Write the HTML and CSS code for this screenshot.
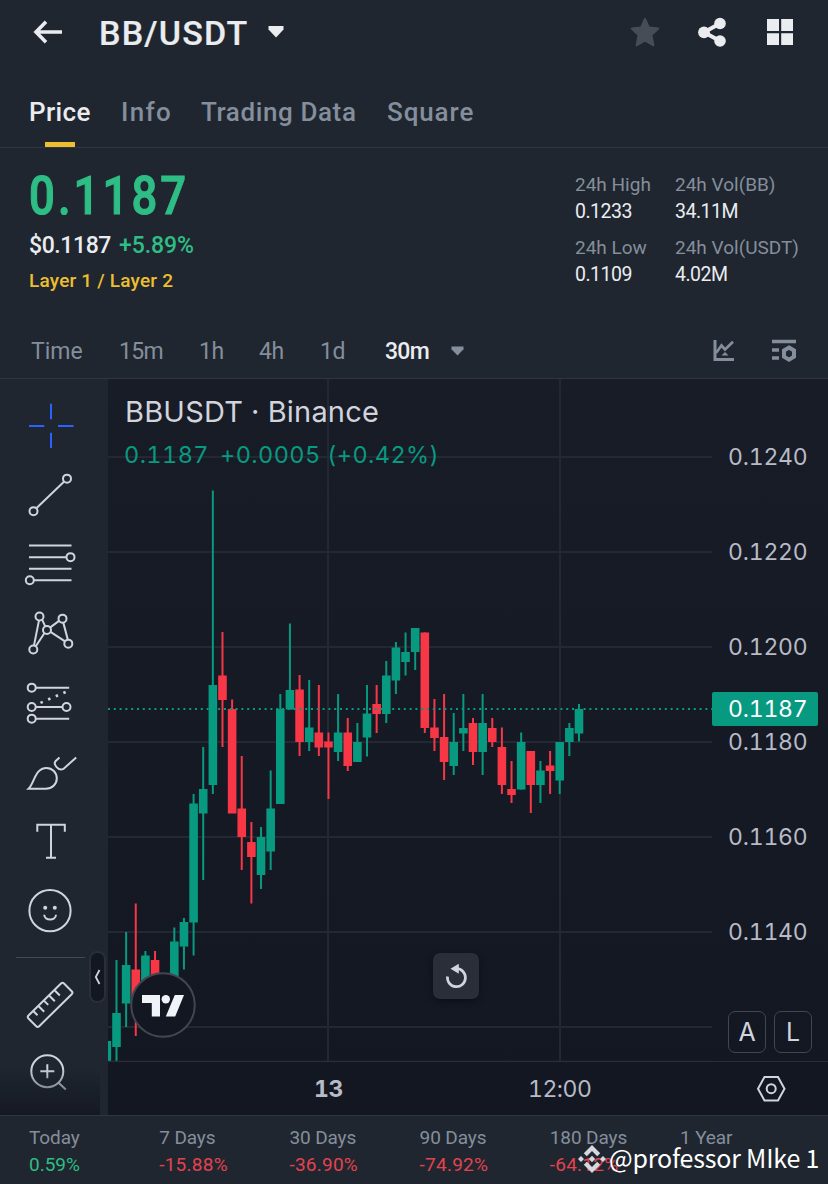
FILE: index.html
```html
<!DOCTYPE html>
<html lang="en">
<head>
<meta charset="utf-8">
<title>BB/USDT</title>
<link rel="stylesheet" href="styles.css">
</head>
<body>
<div class="app">
  <header class="topbar">
    <svg class="back" width="30" height="24" viewBox="0 0 30 24" fill="none" stroke="#eaecef" stroke-width="3.6"><path d="M13 1.8 3 12l10 10.2M3.5 12H29"/></svg>
    <h1 class="pair">BB/USDT</h1>
    <svg class="pair-caret" width="16" height="12" viewBox="0 0 16 12" fill="#eaecef"><path d="M.5 0h15v3.500L8 11.500.500 3.500z"/></svg>
    <svg class="star" width="30" height="30" viewBox="0 0 30 30" fill="#474d57" stroke="#474d57" stroke-width="2" stroke-linejoin="round"><path d="M15 1.800l3.900 8.600 9.400 1.200-6.900 6.400 2 10.300-8.400-4.800-8.400 4.800 2-10.300L1.700 11.600l9.400-1.200z"/></svg>
    <svg class="share" width="30" height="30" viewBox="0 0 30 30" fill="#eaecef"><path d="M23 6.500 7 15.300l16 8.700" fill="none" stroke="#eaecef" stroke-width="4"/><circle cx="23" cy="6.500" r="5.800"/><circle cx="7" cy="15.300" r="5.900"/><circle cx="23" cy="24" r="5.800"/></svg>
    <svg class="grid" width="26" height="26" viewBox="0 0 26 26" fill="#eaecef"><path d="M0 0h12v12H0zM14.200 0h12v12h-12zM0 14.200h12v12H0zM14.200 14.200h12v12h-12z"/></svg>
  </header>

  <nav class="tabs">
    <a class="tab price-tab">Price</a>
    <a class="tab info-tab">Info</a>
    <a class="tab data-tab">Trading Data</a>
    <a class="tab square-tab">Square</a>
  </nav>

  <section class="ticker">
    <div class="quote">
      <div class="last">0.1187</div>
      <div class="fiat"><span class="usd">$0.1187</span><span class="change">+5.89%</span></div>
      <div class="tags">Layer 1 / Layer 2</div>
    </div>
    <dl class="stats">
      <div><dt>24h High</dt><dd>0.1233</dd></div>
      <div><dt>24h Vol(BB)</dt><dd>34.11M</dd></div>
      <div><dt>24h Low</dt><dd>0.1109</dd></div>
      <div><dt>24h Vol(USDT)</dt><dd>4.02M</dd></div>
    </dl>
  </section>

  <nav class="intervals">
    <span class="iv time">Time</span>
    <span class="iv m15">15m</span>
    <span class="iv h1">1h</span>
    <span class="iv h4">4h</span>
    <span class="iv d1">1d</span>
    <span class="iv m30">30m</span>
    <svg class="iv-caret" width="13" height="10" viewBox="0 0 13 10" fill="#848e9c"><path d="M.500.500h12v2.800L6.500 9.500.500 3.300z"/></svg>
    <svg class="indicator" width="22" height="22" viewBox="0 0 22 22" fill="none" stroke="#848e9c" stroke-width="3"><path d="M2 0v19.500h19"/><path d="M3 13l5.500-7.500 3.500 4L20 1.800" stroke-width="2.700"/><path d="M8.500 15.500h7L12 12z" fill="#848e9c" stroke="none"/></svg>
    <svg class="settings" width="24" height="24" viewBox="0 0 24 24" fill="none" stroke="#848e9c"><path d="M0 2.500h24M0 11h7M0 19h7" stroke-width="3.300"/><path d="M17 8.500l5 3v6.200l-5 3-5-3v-6.200z" stroke-width="4"/></svg>
  </nav>

  <main class="workspace">
    <aside class="tools">
      <svg class="tool" viewBox="0 -34.625 108 69.250"><path class="accent" d="M29 .300h15.300M58 .300h15.500M51-21.800v15.300M51 7v15.300"/></svg>
      <svg class="tool" viewBox="0 -34.625 108 69.250"><path d="M36.600 12.400 64.200-14.200"/><circle cx="67" cy="-17" r="4"/><circle cx="33.500" cy="15.500" r="4"/></svg>
      <svg class="tool" viewBox="0 -34.625 108 69.250"><path d="M29-19.200h42.500M29-7.500h37M29 4h42.500M34 15.600h37.500"/><circle cx="70.500" cy="-7.500" r="4"/><circle cx="29.800" cy="15.600" r="4"/></svg>
      <svg class="tool" viewBox="0 -34.625 108 69.250"><path d="M39-13.200 34 11.800M42-14.200l3.200 7M50.300-6.200l8.700-6.500M50.500-1.700l14.500 9.500M44.500-.600 35.800 12.700M63.300-11l4.500 17"/><circle cx="39.500" cy="-17.200" r="4"/><circle cx="62.500" cy="-15" r="4"/><circle cx="47" cy="-3.700" r="4"/><circle cx="68.300" cy="10" r="4"/><circle cx="33.300" cy="15.800" r="4"/></svg>
      <svg class="tool" viewBox="0 -34.625 108 69.250"><path d="M36-15h33.200M36 4.300h26.500M36 16h33.200"/><path d="M40.500.200 66.500-11" stroke-dasharray="2.500 5.800" stroke-width="2.600"/><circle cx="31.700" cy="-15" r="4"/><circle cx="31.700" cy="4.300" r="4"/><circle cx="66.500" cy="4.300" r="4"/><circle cx="31.700" cy="16" r="4"/></svg>
      <svg class="tool" viewBox="0 -34.625 108 69.250"><path d="M28.500 16.200C34.500 10.200 35-4.700 46.500-4.700c5.800 0 10.300 4.700 10.300 10.400 0 6-4.800 10.500-11 10.500zM59.500-15.200l-3.800 3.600c-3 3 2.800 10.600 7.700 7.900L76.200-15.200"/></svg>
      <svg class="tool" viewBox="0 -34.625 108 69.250"><path d="M37.300-9.800v-7h27.500v7M51-16.800v32.700M46 16h10"/></svg>
      <svg class="tool" viewBox="0 -34.625 108 69.250"><circle cx="50" cy="0" r="20.600"/><path d="M44.200 4.200c.3 6.300 11.500 6.300 11.800 0"/><g class="eyes"><circle cx="45.200" cy="-3" r="2"/><circle cx="54.800" cy="-3" r="2"/></g></svg>
      <div class="divider"></div>
      <svg class="tool measure" viewBox="0 970 108 69.250"><path d="M61 983.500q1.500-1.500 3 0l7.700 7.700q1.500 1.500 0 3L39.200 1026.200q-1.500 1.500-3 0l-7.700-7.700q-1.500-1.500 0-3zM33.500 1011.300l4 4M38.700 1006.200l5.500 5.500M44.200 1000.900l4 4M49.300 995.800l5.500 5.500M54.800 990.500l5 5"/></svg>
      <svg class="tool zoom" viewBox="0 1039.250 108 69.250"><circle cx="47.300" cy="1071.500" r="16"/><path d="M40.300 1071.500h14M47.300 1064.500v14M58.500 1083l7.300 6.800"/></svg>
      <div class="fade"></div>
      <div class="collapse"><svg width="7" height="16" viewBox="0 0 7 16" fill="none" stroke="#d1d4dc" stroke-width="1.800"><path d="M5.500 1 1.800 8l3.700 7"/></svg></div>
    </aside>

    <section class="chart">
      <div class="plot">
        <svg class="candles" id="candles" width="605" height="683" viewBox="108 379 605 683"></svg>
        <div class="legend">
          <div class="symbol">BBUSDT · Binance</div>
          <div class="values"><span class="v-last">0.1187</span><span class="v-diff">+0.0005 (+0.42%)</span></div>
        </div>
        <svg class="tv-logo" width="66" height="66" viewBox="130 972 66 66"><circle cx="163" cy="1005" r="31.800" fill="#131722" stroke="#434651" stroke-width="2"/><g fill="#f0f3fa"><path d="M142 995h18v21.500h-8.200V1003H142z"/><circle cx="165.800" cy="999.200" r="4.200"/><path d="M174.800 995h9.200l-8.800 21.500h-9.400z"/></g></svg>
        <button class="reset"><svg width="24" height="28" viewBox="444 962 24 28"><path d="M447.500 976.500a9 9 0 1 0 9-7.800" fill="none" stroke="#d1d4dc" stroke-width="2.700"/><path d="M450.500 968.800l8.300-5v10z" fill="#d1d4dc"/></svg></button>
      </div>
      <div class="price-axis">
        <span>0.1240</span><span>0.1220</span><span>0.1200</span><span>0.1180</span><span>0.1160</span><span>0.1140</span>
        <div class="last-tag">0.1187</div>
        <div class="scale-buttons"><button>A</button><button>L</button></div>
      </div>
      <div class="time-axis"><span class="day">13</span><span class="noon">12:00</span></div>
      <div class="axis-settings"><svg width="30" height="28" viewBox="756 1075 30 28" fill="none" stroke="#d1d4dc" stroke-width="2"><path d="M764.500 1077h13.500l6.500 11.700-6.500 11.800h-13.500l-6.500-11.800z"/><circle cx="771.200" cy="1088.700" r="4.500"/></svg></div>
    </section>
  </main>

  <footer class="performance">
    <div class="up"><b>Today</b><i>0.59%</i></div>
    <div><b>7 Days</b><i>-15.88%</i></div>
    <div><b>30 Days</b><i>-36.90%</i></div>
    <div><b>90 Days</b><i>-74.92%</i></div>
    <div><b>180 Days</b><i>-64.12%</i></div>
    <div class="none"><b>1 Year</b><i>--</i></div>
  </footer>

  <div class="credit">
    <svg width="28" height="28" viewBox="0 0 28 28" fill="#d5d8e0"><path d="M14 0l8.200 8.200-3 3L14 6l-5.200 5.200-3-3zM14 28l-8.200-8.200 3-3L14 22l5.200-5.200 3 3zM3 11l3 3-3 3-3-3zM25 11l3 3-3 3-3-3zM14 10.800l3.200 3.200-3.200 3.200-3.200-3.200z"/></svg>
    <span>@professor MIke 1</span>
  </div>
</div>
<script src="chart.js"></script>
</body>
</html>
```
FILE: styles.css
```css
* { box-sizing: border-box; }
body { margin: 0; background: #1f262f; font-family: Roboto, "Noto Sans", sans-serif; color: #eaecef; }
svg { display: block; flex: none; }
button { padding: 0; font: inherit; color: inherit; }
.app { position: relative; width: 828px; height: 1184px; overflow: hidden; display: flex; flex-direction: column; }

.topbar { height: 66px; flex: none; display: flex; align-items: center; padding: 0 35px 3px 33px; }
.pair { margin: 0 0 0 36px; font-size: 34px; line-height: 40px; font-weight: 500; letter-spacing: 1.200px; width: 149px; white-space: nowrap; -webkit-text-stroke: .2px; padding-top: 2px; }
.pair-caret { margin-left: 20px; }
.star { margin-left: auto; }
.share { margin-left: 37px; }
.grid { margin-left: 40px; }

.tabs { height: 82px; flex: none; display: flex; padding-left: 29px; border-bottom: 1px solid #2f363f; font-size: 26px; font-weight: 500; line-height: 30px; color: #848e9c; white-space: nowrap; }
.tab { position: relative; padding-top: 31px; }
.price-tab { width: 92px; color: #eaecef; letter-spacing: .4px; }
.price-tab::after { content: ""; position: absolute; left: 16px; bottom: 0; width: 30px; height: 5px; background: #ecbf30; }
.info-tab { width: 80px; letter-spacing: 1.300px; }
.data-tab { width: 186px; letter-spacing: .6px; }
.square-tab { letter-spacing: .9px; }

.ticker { height: 176px; flex: none; display: flex; justify-content: space-between; white-space: nowrap; }
.quote { padding: 16px 0 0 29px; }
.last { width: 190px; font-size: 53.500px; line-height: 64px; font-weight: 500; letter-spacing: 3.600px; color: #2ebd85; -webkit-text-stroke: 1.200px; transform: scaleX(.85); transform-origin: 0 0; }
.fiat { display: flex; margin-top: 4px; font-size: 23px; line-height: 28px; font-weight: 500; letter-spacing: -.4px; }
.usd { width: 90px; }
.change { color: #2ebd85; letter-spacing: -.1px; }
.tags { margin-top: 10px; font-size: 19px; line-height: 22px; font-weight: 500; letter-spacing: .2px; color: #ecbf30; }
.stats { width: 253px; margin: 26px 0 0; display: grid; grid-template-columns: 100px 1fr; grid-auto-rows: 63px; }
.stats dt { font-size: 19px; line-height: 22px; color: #848e9c; }
.stats dd { margin: 4px 0 0; font-size: 19.500px; line-height: 24px; letter-spacing: -.5px; color: #eaecef; }

.intervals { height: 55px; flex: none; display: flex; align-items: center; padding: 0 32px 0 31px; border-bottom: 1px solid #2f363f; font-size: 23px; line-height: 28px; color: #848e9c; white-space: nowrap; }
.iv { padding-top: 2px; }
.time { width: 88px; }
.m15 { width: 80px; letter-spacing: -.7px; }
.h1 { width: 60px; letter-spacing: -.4px; }
.h4 { width: 61px; letter-spacing: -.4px; }
.d1 { width: 65px; letter-spacing: -.4px; }
.m30 { width: 66px; letter-spacing: -.7px; color: #eaecef; font-weight: 500; }
.indicator { margin-left: auto; }
.settings { margin-left: 37px; }

.workspace { height: 736px; flex: none; display: flex; }
.tools { position: relative; width: 108px; display: flex; flex-direction: column; padding-top: 12.400px; }
.tool { width: 108px; height: 69.250px; fill: none; stroke: #d1d4dc; stroke-width: 2; }
.tool .accent { stroke: #2962ff; }
.tool .eyes { fill: #d1d4dc; stroke: none; }
.divider { height: 1.500px; margin: 11.500px 23.500px 11.700px 15.500px; background: #434852; }
.fade { position: absolute; left: 0; bottom: 0; width: 100px; height: 48px; background: linear-gradient(#13172200, #131722e0); }
.collapse { position: absolute; left: 89px; top: 572px; width: 17px; height: 52px; border: 2px solid #2a2e39; border-radius: 8px; background: #131722; display: flex; align-items: center; justify-content: center; }

.chart { width: 720px; display: grid; grid-template: 683px 53px / 605px 115px; background: linear-gradient(#181c27, #131722); font-family: Inter, Roboto, sans-serif; font-variant-numeric: tabular-nums; color: #b8bbc6; }
.plot { position: relative; }
.legend { position: absolute; left: 16px; top: 16px; white-space: nowrap; }
.symbol { padding-left: 1px; font-size: 29px; line-height: 34px; letter-spacing: .2px; color: #d1d4dc; }
.values { display: flex; margin-top: 10px; font-size: 23.500px; line-height: 32px; letter-spacing: .4px; color: #089981; }
.v-last { width: 96px; }
.tv-logo { position: absolute; left: 22px; top: 593px; }
.reset { position: absolute; left: 325px; top: 574px; width: 46px; height: 46px; border: 0; border-radius: 7px; background: #2a2e39; box-shadow: 0 2px 6px #0006; display: flex; align-items: center; justify-content: center; }
.price-axis { position: relative; padding: 62px 0 0 15px; display: flex; flex-direction: column; align-items: flex-start; font-size: 23px; line-height: 32px; letter-spacing: -.2px; border-bottom: 1px solid #2a2e39; }
.price-axis > span { height: 95px; flex: none; }
.last-tag { position: absolute; left: -1px; top: 313px; width: 106px; height: 34px; padding-left: 16px; line-height: 34px; border-radius: 2px; background: #089981; color: #fff; }
.scale-buttons { position: absolute; left: 15px; top: 632px; display: flex; gap: 8px; }
.scale-buttons button { width: 38px; height: 42px; border: 1.500px solid #434651; border-radius: 7px; background: none; font-size: 25px; color: #d1d4dc; }
.time-axis { display: flex; padding: 11px 0 0 206px; font-size: 23px; line-height: 32px; }
.day { width: 214px; font-weight: 700; letter-spacing: -.3px; }
.noon { white-space: nowrap; letter-spacing: -.5px; }
.axis-settings { padding: 13px 0 0 43px; }

.performance { height: 69px; flex: none; display: grid; grid-template-columns: repeat(6, 130.200px); padding: 10px 0 0 29px; border-top: 1px solid #2f363f; background: #20262f; font-size: 19px; line-height: 24px; white-space: nowrap; }
.performance div { display: flex; flex-direction: column; gap: 3px; color: #e2434f; }
.performance b { font-weight: 400; color: #848e9c; letter-spacing: -.1px; }
.performance i { font-style: normal; letter-spacing: .25px; }
.performance .up { color: #2ebd85; }
.performance .up i { letter-spacing: 0; }
.performance .none { color: #848e9c; }

.credit { position: absolute; left: 578px; top: 1142px; display: flex; align-items: center; gap: 3px; font: 400 25px/36px "Noto Sans CJK SC", sans-serif; letter-spacing: -.2px; color: #fff; white-space: nowrap; }
.credit span { margin-top: -3px; }
```
FILE: chart.js
```js
// Candles: [index, wickTop, wickBottom, bodyTop, bodyBottom, isUp]
const candles = [
  [-1, 1041, 1061, 1041, 1061, 1], [0, 960, 1061, 1013, 1047, 1], [1, 932, 1027, 965, 1003.5, 1],
  [2, 903.5, 1036, 969.5, 1000, 0], [3, 951, 1000, 955.5, 1000, 1], [4, 951, 1000, 960, 1000, 0],
  [6, 927.5, 990, 941.5, 985, 1], [7, 918, 969.5, 922, 946.5, 1], [8, 794, 955.5, 803.5, 922.5, 1],
  [9, 747, 880, 789, 813.5, 1], [10, 490.5, 794, 685, 785, 1], [11, 632, 747, 675.5, 700, 0],
  [12, 699.5, 813, 709, 813.5, 0], [13, 756, 870, 808.5, 837, 0], [14, 822, 903.5, 842, 857, 0],
  [15, 827, 889, 837, 875, 1], [16, 770.5, 870, 808.5, 851.5, 1], [17, 694, 804, 709, 804, 1],
  [18, 623.5, 709.5, 690, 709.5, 1], [19, 675, 756, 689.5, 742, 0], [20, 680, 751, 727.5, 742, 1],
  [21, 685, 756, 732.5, 747.5, 0], [22, 732.5, 799, 741.5, 747.5, 0], [23, 694, 761, 732.5, 752, 1],
  [24, 718, 771, 732.5, 766, 0], [25, 723, 762, 742, 762, 1], [26, 685, 756.5, 713.5, 737.5, 1],
  [27, 685, 733, 704, 714, 0], [28, 661, 723, 675.5, 714, 1], [29, 642, 694, 647.5, 680.5, 1],
  [30, 632.5, 675.5, 652, 662, 1], [31, 628, 670, 628, 652, 1], [32, 632.5, 733, 632.5, 728, 0],
  [33, 699, 751, 727.5, 738, 0], [34, 694, 780, 737, 762, 0], [35, 713, 775, 742, 766, 1],
  [36, 694, 751, 728, 733.5, 1], [37, 718, 765, 723, 752, 0], [38, 694, 775, 723, 752, 1],
  [39, 718, 747, 728, 742, 0], [40, 727.5, 794, 747, 785, 0], [41, 761, 803, 789, 795, 0],
  [42, 732.5, 789.5, 742, 789.5, 1], [43, 751, 813, 751, 785, 0], [44, 761, 803, 770.5, 785, 1],
  [45, 751, 794, 765.5, 771, 0], [46, 742, 794, 742, 780.5, 1], [47, 723, 756, 728, 742, 1],
  [48, 704, 741.5, 709, 733.5, 1]
];

const parts = [];
for (const x of [328, 560]) parts.push(`<path d="M${x} 379V1061" stroke="#242833" stroke-width="2"/>`);
for (let y = 457; y < 1061; y += 95) parts.push(`<path d="M108 ${y}H712" stroke="#242833" stroke-width="2"/>`);
for (const [i, wt, wb, bt, bb, up] of candles) {
  const x = 116.5 + 9.635 * i;
  const color = up ? "#089981" : "#f73646";
  parts.push(`<rect x="${x - 1}" y="${wt}" width="2" height="${wb - wt}" fill="${color}"/>`);
  parts.push(`<rect x="${x - 4.3}" y="${bt}" width="8.600" height="${bb - bt}" fill="${color}"/>`);
}
parts.push('<path d="M108 709H712" stroke="#089981" stroke-width="2" stroke-dasharray="2 3.800"/>');
parts.push('<path d="M108 1061.500H713" stroke="#2a2e39" stroke-width="1.500"/>');
document.getElementById("candles").innerHTML = parts.join("");
```
